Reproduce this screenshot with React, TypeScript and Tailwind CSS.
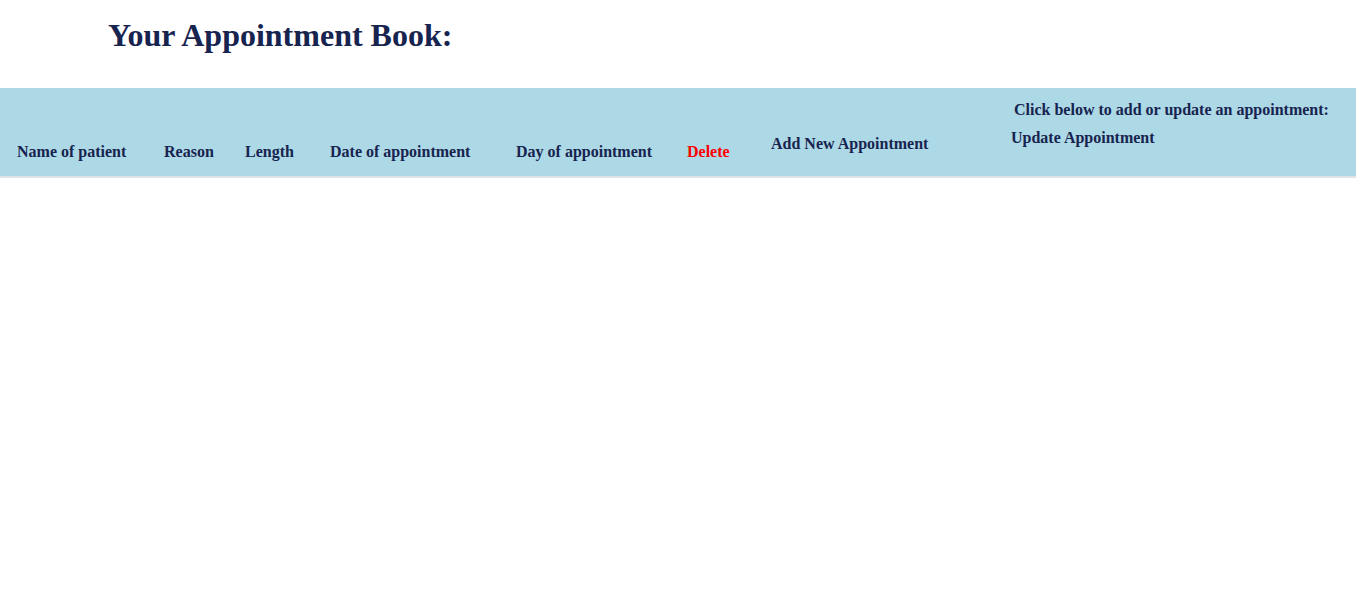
export default function App() {
  return (
    <div className="min-h-screen bg-white font-['Liberation_Serif',serif] text-[#17244f]">
      <h1 className="pl-[108px] pt-[13px] h-[88px] text-[32px] font-bold leading-[44px]">
        Your Appointment Book:
      </h1>
      <div className="flex h-[90px] bg-[#add8e6] border-b-2 border-[#dde3e6] text-[16px] font-bold">
        <div className="w-[164px] pl-[17px] pt-[52px]">Name of patient</div>
        <div className="w-[81px] pt-[52px]">Reason</div>
        <div className="w-[85px] pt-[52px]">Length</div>
        <div className="w-[186px] pt-[52px]">Date of appointment</div>
        <div className="w-[171px] pt-[52px]">Day of appointment</div>
        <div className="w-[84px] pt-[52px] text-[#ff0000]">Delete</div>
        <div className="w-[240px] pt-[44px]">
          <a href="#">Add New Appointment</a>
        </div>
        <div className="flex flex-col pt-[10px]">
          <p className="pl-[3px]">Click below to add or update an appointment:</p>
          <a href="#" className="mt-[4px]">Update Appointment</a>
        </div>
      </div>
    </div>
  );
}
